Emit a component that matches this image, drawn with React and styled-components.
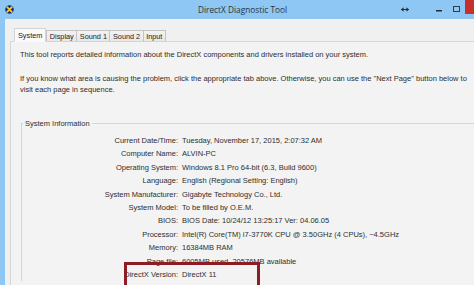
import React from "react";
import styled, { createGlobalStyle } from "styled-components";

const Global = createGlobalStyle`
  html, body { margin: 0; padding: 0; }
  body {
    width: 474px; height: 285px; overflow: hidden;
    background: #8ec6f4;
    font-family: "Liberation Sans", Arial, sans-serif;
  }
`;

const Window = styled.div`
  width: 474px; height: 285px;
  display: flex; flex-direction: column;
  background: #8ec6f4;
  overflow: hidden;
`;

const TitleBar = styled.div`
  height: 19px; flex: none;
  display: flex; align-items: center;
`;

const AppIcon = styled.svg`
  margin-left: 5px; flex: none;
`;

const Title = styled.div`
  flex: 1;
  text-align: center;
  padding-left: 70px;
  font-family: "Open Sans", "Noto Sans", sans-serif;
  font-size: 8.3px;
  color: #2b3440;
  line-height: 19px;
`;

const Controls = styled.div`
  display: flex; align-items: center; height: 19px;
  flex: none;
`;

const Ctl = styled.svg`
  flex: none;
  margin-left: ${(p) => p.$ml || 0}px;
  margin-top: ${(p) => p.$mt || 0}px;
`;

const Close = styled.div`
  width: 9px; height: 14px; align-self: flex-start;
  background: #c7312b;
  margin-left: 5px;
  flex: none;
`;

const Client = styled.div`
  flex: 1;
  margin-left: 5px;
  background: #f0f0f0;
  padding: 9px 0 0 5px;
  display: flex; flex-direction: column;
  min-height: 0;
`;

const TabRow = styled.div`
  display: flex; align-items: flex-end;
  padding-left: 4px;
  margin-bottom: -1px;
  position: relative; z-index: 1;
`;

const Tab = styled.div`
  font-size: 7.3px;
  color: #222;
  padding: 0 ${(p) => (p.$active ? 3 : 2.5)}px;
  height: ${(p) => (p.$active ? 14 : 12)}px;
  line-height: ${(p) => (p.$active ? 14 : 12)}px;
  border: 1px solid ${(p) => (p.$active ? "#d4d4d4" : "#c4c4c4")};
  border-bottom: ${(p) => (p.$active ? "1px solid #fafafa" : "1px solid #d4d4d4")};
  background: ${(p) => (p.$active ? "#fafafa" : "linear-gradient(#f2f2f2, #e8e8e8)")};
  margin-left: ${(p) => (p.$first ? 0 : p.$afterActive ? 0 : -1)}px;
  box-sizing: border-box;
  white-space: nowrap;
`;

const Panel = styled.div`
  flex: 1;
  border-top: 1px solid #d6d6d6;
  border-left: 1px solid #d6d6d6;
  background: #f3f3f3;
  padding: 7px 0 0 9px;
  color: #2e2e2e;
  font-size: 7.5px;
  line-height: 11px;
`;

const Para = styled.p`
  margin: ${(p) => p.$mt || 0}px 0 0 0;
  white-space: pre-line;
`;

const Group = styled.fieldset`
  margin: 23px 0 0 1px;
  padding: 5px 0 0 0;
  border: none;
  border-top: 1px solid #d6d6d6;
  border-left: 1px solid #d6d6d6;
  min-width: 0;
`;

const Legend = styled.legend`
  padding: 0 2px;
  margin-left: 1px;
  line-height: 11px;
`;

const Row = styled.div`
  display: grid;
  grid-template-columns: 156px 1fr;
  column-gap: 4px;
  line-height: 13.4px;
  white-space: nowrap;
  position: relative;

  ${(p) =>
    p.$highlight &&
    `
    &::after {
      content: "";
      position: absolute;
      left: 102px; top: -6px;
      width: 136px; height: 30px;
      box-sizing: border-box;
      border: 3px solid #8c1d24;
    }
  `}
`;

const Label = styled.span`
  text-align: right;
`;

const Value = styled.span``;

const rows = [
  ["Current Date/Time:", "Tuesday, November 17, 2015, 2:07:32 AM"],
  ["Computer Name:", "ALVIN-PC"],
  ["Operating System:", "Windows 8.1 Pro 64-bit (6.3, Build 9600)"],
  ["Language:", "English (Regional Setting: English)"],
  ["System Manufacturer:", "Gigabyte Technology Co., Ltd."],
  ["System Model:", "To be filled by O.E.M."],
  ["BIOS:", "BIOS Date: 10/24/12 13:25:17 Ver: 04.06.05"],
  ["Processor:", "Intel(R) Core(TM) i7-3770K CPU @ 3.50GHz (4 CPUs), ~4.5GHz"],
  ["Memory:", "16384MB RAM"],
  ["Page file:", "6005MB used, 20576MB available"],
  ["DirectX Version:", "DirectX 11"],
];

const tabs = ["System", "Display", "Sound 1", "Sound 2", "Input"];

export default function App() {
  return (
    <>
      <Global />
      <Window>
        <TitleBar>
          <AppIcon width="9" height="9" viewBox="0 0 9 9">
            <circle cx="4.5" cy="4.5" r="4.3" fill="#1d2a78" />
            <path d="M2.2 2.2 L6.8 6.8 M6.8 2.2 L2.2 6.8" stroke="#f2d51c" strokeWidth="1.8" strokeLinecap="round" />
          </AppIcon>
          <Title>DirectX Diagnostic Tool</Title>
          <Controls>
            <Ctl width="8" height="5" viewBox="0 0 8 5">
              <path d="M0.5 2.5 H7.5" stroke="#2a2a2a" strokeWidth="1" />
              <path d="M0 2.5 L2.5 0.3 V4.7 Z M8 2.5 L5.5 0.3 V4.7 Z" fill="#2a2a2a" />
            </Ctl>
            <Ctl width="6" height="2" viewBox="0 0 6 2" $ml={27} $mt={3}>
              <rect x="0" y="0" width="6" height="1.5" fill="#2a2a2a" />
            </Ctl>
            <Ctl width="7" height="6" viewBox="0 0 7 6" $ml={11} $mt={-2}>
              <rect x="0.5" y="0.5" width="6" height="5" fill="none" stroke="#3a3a3a" strokeWidth="1" />
            </Ctl>
            <Close />
          </Controls>
        </TitleBar>
        <Client>
          <TabRow>
            {tabs.map((t, i) => (
              <Tab key={t} $active={i === 0} $first={i === 0} $afterActive={i === 1}>{t}</Tab>
            ))}
          </TabRow>
          <Panel>
            <Para>This tool reports detailed information about the DirectX components and drivers installed on your system.</Para>
            <Para $mt={13}>{"If you know what area is causing the problem, click the appropriate tab above.  Otherwise, you can use the \"Next Page\" button below to\nvisit each page in sequence."}</Para>
            <Group>
              <Legend>System Information</Legend>
              {rows.map(([l, v], i) => (
                <Row key={l} $highlight={i === rows.length - 1}>
                  <Label>{l}</Label>
                  <Value>{v}</Value>
                </Row>
              ))}
            </Group>
          </Panel>
        </Client>
      </Window>
    </>
  );
}
